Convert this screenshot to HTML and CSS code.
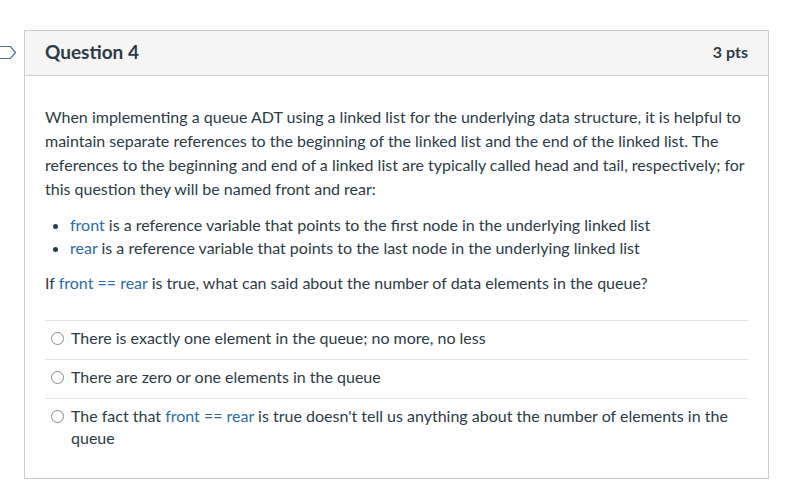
FILE: index.html
```html
<!DOCTYPE html>
<html>
<head>
<meta charset="utf-8">
<link rel="stylesheet" href="styles.css">
</head>
<body>
<svg class="flag" width="18" height="16" viewBox="0 0 18 16"><polygon points="-2,1.5 10.5,1.5 15.5,7.5 10.5,13.5 -2,13.5" fill="none" stroke="#4a7199" stroke-width="1.2"/></svg>
<div class="card">
  <div class="header">
    <span class="title">Question 4</span>
    <span class="pts">3 pts</span>
  </div>
  <div class="content">
    <p>When implementing a queue ADT using a linked list for the underlying data structure, it is helpful to maintain separate references to the beginning of the linked list and the end of the linked list. The references to the beginning and end of a linked list are typically called head and tail, respectively; for this question they will be named front and rear:</p>
    <ul>
      <li><span class="code">front</span> is a reference variable that points to the first node in the underlying linked list</li>
      <li><span class="code">rear</span> is a reference variable that points to the last node in the underlying linked list</li>
    </ul>
    <p>If <span class="code">front == rear</span> is true, what can said about the number of data elements in the queue?</p>
    <div class="answers">
      <label class="answer"><span class="radio"></span><span class="atext">There is exactly one element in the queue; no more, no less</span></label>
      <label class="answer"><span class="radio"></span><span class="atext">There are zero or one elements in the queue</span></label>
      <label class="answer"><span class="radio"></span><span class="atext">The fact that <span class="code">front == rear</span> is true doesn't tell us anything about the number of elements in the queue</span></label>
    </div>
  </div>
</div>
</body>
</html>
```
FILE: styles.css
```css
body {
  margin: 0;
  font-family: Lato, "Open Sans", sans-serif;
  color: #2d3b45;
  background: #fff;
}
.flag {
  position: absolute;
  left: 0;
  top: 45px;
}
.card {
  margin: 30px 0 0 24px;
  width: 743px;
  border: 1px solid #c7cdd1;
}
.header {
  height: 44px;
  background: #f5f5f5;
  border-bottom: 1px solid #c7cdd1;
  display: flex;
  align-items: center;
  justify-content: space-between;
  padding: 0 20px;
}
.title {
  font-size: 19px;
  font-weight: bold;
  position: relative;
  top: -2px;
}
.pts {
  font-size: 16px;
  font-weight: bold;
  position: relative;
  top: -2px;
}
.content {
  padding: 29px 20px 19px 20px;
  font-size: 16px;
  line-height: 24px;
}
p {
  margin: 0 0 12px 0;
}
ul {
  margin: 0 0 12px 0;
  padding-left: 25px;
  line-height: 23px;
}
.code {
  color: #2b6ca3;
}
.answers {
  margin-top: 25px;
}
.answer {
  display: flex;
  align-items: flex-start;
  border-top: 1px solid #e1e4e6;
  padding: 6px 0 10px 6px;
  line-height: 22px;
}
.radio {
  flex: none;
  width: 11px;
  height: 11px;
  border: 1px solid #8a8a8a;
  border-radius: 50%;
  margin: 5px 7px 0 0;
}
.atext {
  flex: 1;
}
```
